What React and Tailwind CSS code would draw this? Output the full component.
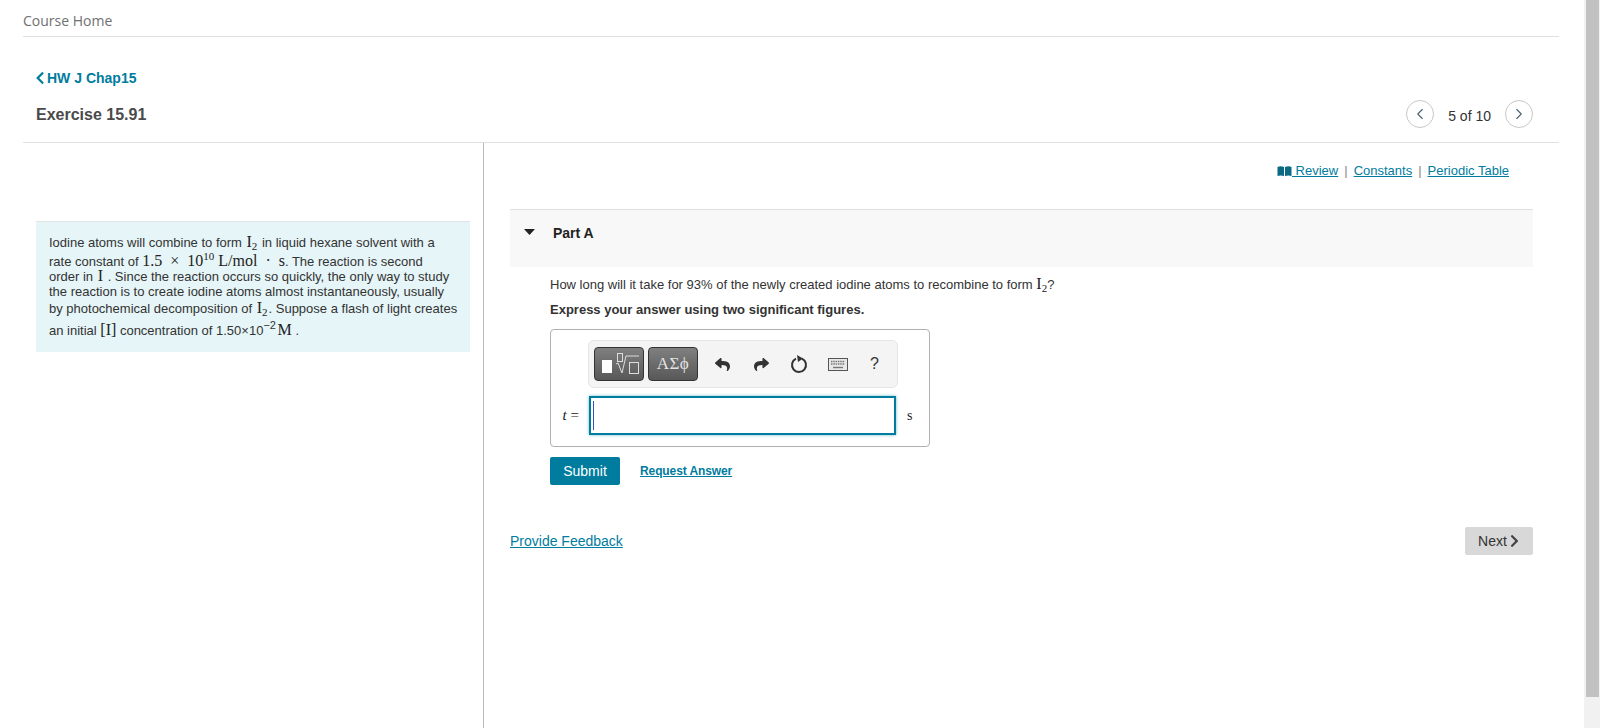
import { FaChevronLeft, FaChevronRight, FaReply, FaShare } from "react-icons/fa";
import { ChevronLeft, ChevronRight } from "lucide-react";

function M({ children, className = "px-px" }) {
  return <span className={`font-['Liberation_Serif',serif] text-[16px] text-[#222] ${className}`}>{children}</span>;
}

function Sub({ children }) {
  return <sub className="static text-[11px] leading-none align-[-3px]">{children}</sub>;
}

function Sup({ children }) {
  return <sup className="static text-[11px] leading-none align-[6px]">{children}</sup>;
}

function Toolbar() {
  return (
    <div className="ml-[37px] w-[310px] h-[48px] bg-[#f4f4f4] border border-[#e5e5e5] rounded-md flex items-center pl-[5px]">
      <div className="w-[50px] h-[34px] rounded bg-gradient-to-b from-[#808080] to-[#585858] border border-[#333] flex items-center justify-center">
        <svg width="42" height="28" viewBox="0 0 42 28" fill="none">
          <rect x="4" y="10" width="10" height="13" fill="#fff" />
          <rect x="19.500" y="3.500" width="5" height="8" stroke="#ddd" />
          <path d="M18 14l2-1 4 10 4-17h13" stroke="#ddd" strokeWidth="1" />
          <rect x="31.500" y="12.500" width="9" height="11" stroke="#ddd" />
        </svg>
      </div>
      <div className="ml-[4px] w-[50px] h-[34px] rounded bg-gradient-to-b from-[#808080] to-[#585858] border border-[#333] flex items-center justify-center font-['Liberation_Serif',serif] text-[17px] tracking-[0.5px] text-[#e4e4e4]">
        ΑΣϕ
      </div>
      <FaReply className="ml-[17px] text-[#333] w-[15px] h-[15px]" />
      <FaShare className="ml-[24px] text-[#333] w-[15px] h-[15px]" />
      <svg className="ml-[21px]" width="18" height="20" viewBox="0 0 18 20" fill="none">
        <path d="M12 4.600a7 7 0 1 1-6 0" stroke="#333" strokeWidth="2" />
        <path d="M7 1l6 3.500-5 3.500z" fill="#333" />
      </svg>
      <svg className="ml-[20px]" width="20" height="13" viewBox="0 0 20 13" fill="none">
        <rect x="0.500" y="0.500" width="19" height="12" fill="#e8e8e8" stroke="#555" />
        <path d="M3 3.500h14M3 6h14" stroke="#777" strokeWidth="1.400" strokeDasharray="1.500 .8" />
        <path d="M5 9.500h10" stroke="#777" strokeWidth="1.400" />
      </svg>
      <span className="ml-[22px] text-[16px] text-[#333]">?</span>
    </div>
  );
}

export default function App() {
  return (
    <div className="h-[728px] flex overflow-hidden bg-white font-['Liberation_Sans',sans-serif] text-[#333]">
      <div className="w-[1584px]">
        <div className="ml-[23px] w-[1536px] h-[37px] border-b border-[#e0e0e0] pt-[11px] font-['Open_Sans',sans-serif] text-[14px] leading-[20px] text-[#707070]">
          Course Home
        </div>

        <div className="ml-[23px] w-[1536px] h-[106px] border-b border-[#e0e0e0] pl-[13px] pr-[26px]">
          <div className="pt-[33px] flex items-center text-[#007c9e] font-bold text-[14px] leading-[16px]">
            <FaChevronLeft className="-ml-[2px] w-[12px] h-[14px] mr-[1px]" />
            HW J Chap15
          </div>
          <div className="flex items-center justify-between mt-[16px]">
            <h1 className="font-bold text-[16px] leading-[24px] text-[#4a4a4a]">Exercise 15.91</h1>
            <div className="flex items-center text-[14px] -mt-[2px]">
              <span className="w-[28px] h-[28px] rounded-full border border-[#c8c8c8] flex items-center justify-center">
                <ChevronLeft className="w-[18px] h-[18px] text-[#4d6470]" strokeWidth={1.5} />
              </span>
              <span className="mx-[14px] mt-[5px]">5 of 10</span>
              <span className="w-[28px] h-[28px] rounded-full border border-[#c8c8c8] flex items-center justify-center">
                <ChevronRight className="w-[18px] h-[18px] text-[#4d6470]" strokeWidth={1.5} />
              </span>
            </div>
          </div>
        </div>

        <div className="flex ml-[23px] h-[585px]">
          <div className="w-[461px] border-r border-[#b8b8b8] pl-[13px] pt-[78px]">
            <div className="w-[434px] h-[131px] bg-[#e6f5f7] border-t border-[#dfe5e6] pl-[13px] pt-[12px] text-[13px] leading-[16px] text-[#333]">
              <p className="h-[17px]">Iodine atoms will combine to form <M>I<Sub>2</Sub></M> in liquid hexane solvent with a</p>
              <p className="h-[17px]">rate constant of <M className="">1.5 &nbsp;× &nbsp;10<Sup>10</Sup> L/mol &nbsp;· &nbsp;s</M>. The reaction is second</p>
              <p className="h-[16px]">order in <M>I</M> . Since the reaction occurs so quickly, the only way to study</p>
              <p className="h-[16px]">the reaction is to create iodine atoms almost instantaneously, usually</p>
              <p className="h-[20px]">by photochemical decomposition of <M>I<Sub>2</Sub></M>. Suppose a flash of light creates</p>
              <p>an initial <M className="">[I]</M> concentration of 1.50×10<Sup>−2</Sup> <M className="-ml-[2px]">M</M> .</p>
            </div>
          </div>

          <div className="w-[1049px] pl-[26px]">
            <div className="h-[66px] pt-[20px] flex justify-end pr-[24px] text-[13px] leading-[16px] text-[#007c9e]">
              <span className="flex items-center h-[16px]">
                <a className="flex items-center underline">
                  <svg width="15" height="10" viewBox="0 0 14 10" fill="#0a6a84">
                    <path d="M0 1q3-1.500 6.500 0v9q-3.500-1-6.500 0zM7.500 1q3.500-1.500 6.500 0v9q-3-1-6.500 0z" />
                  </svg>
                  <span className="whitespace-pre"> Review</span>
                </a>
                <span className="mx-[6px] text-[#888]">|</span>
                <a className="underline">Constants</a>
                <span className="mx-[6px] text-[#888]">|</span>
                <a className="underline">Periodic Table</a>
              </span>
            </div>

            <div className="w-[1023px] h-[58px] bg-[#f8f8f8] border-t border-[#e0e0e0] flex pt-[15px]">
              <svg className="ml-[14px] mt-[4px]" width="11" height="6" viewBox="0 0 11 6" fill="#222">
                <path d="M0 0h11L5.500 6z" />
              </svg>
              <span className="ml-[18px] font-bold text-[14px] leading-[16px] text-[#222]">Part A</span>
            </div>

            <div className="pl-[40px]">
              <p className="mt-[8px] h-[18px] text-[13px] leading-[18px]">
                How long will it take for 93% of the newly created iodine atoms to recombine to form <M className="">I<Sub>2</Sub></M>?
              </p>
              <p className="mt-[8px] font-bold text-[13px] leading-[18px]">Express your answer using two significant figures.</p>

              <div className="mt-[10px] w-[380px] h-[118px] border border-[#b0b0b0] rounded pt-[10px] flex flex-col">
                <Toolbar />
                <div className="flex items-center mt-[8px]">
                  <span className="w-[38px] text-right pr-[10px] font-['Liberation_Serif',serif] text-[15px] text-[#222]"><i>t</i> =</span>
                  <div className="w-[307px] h-[39px] border-2 border-[#007c9e] shadow-[0_0_3px_#6fb8cc] bg-white flex items-center pl-[2px]">
                    <span className="w-px h-[29px] bg-[#3355bb]"></span>
                  </div>
                  <span className="ml-[11px] font-['Liberation_Serif',serif] text-[14px] text-[#222]">s</span>
                </div>
              </div>

              <div className="flex items-center mt-[10px]">
                <button className="w-[70px] h-[28px] bg-[#007c9e] rounded-[2px] text-white text-[14px]">Submit</button>
                <a className="ml-[20px] font-bold text-[12px] tracking-[-0.1px] text-[#007c9e] underline">Request Answer</a>
              </div>
            </div>

            <div className="w-[1023px] mt-[42px] flex items-center justify-between">
              <a className="text-[14px] text-[#007c9e] underline">Provide Feedback</a>
              <button className="w-[68px] h-[28px] bg-[#d8d8d8] rounded-[2px] flex items-center justify-center gap-[2px] text-[14px] text-[#333]">
                Next
                <FaChevronRight className="w-[11px] h-[14px] text-[#444]" />
              </button>
            </div>
          </div>
        </div>
      </div>

      <div className="w-[16px] h-[728px] bg-[#f1f1f1] pl-[2px]">
        <div className="w-[13px] h-[697px] bg-[#c1c1c1]"></div>
      </div>
    </div>
  );
}
